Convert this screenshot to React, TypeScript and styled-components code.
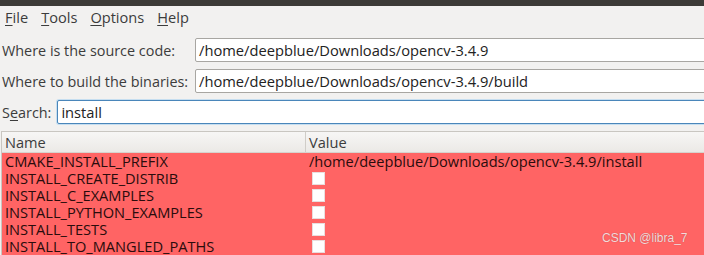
import React from 'react';
import styled, { createGlobalStyle } from 'styled-components';

const GlobalStyle = createGlobalStyle`
  html, body {
    margin: 0;
    padding: 0;
    overflow: hidden;
    background: #f2f1f0;
  }
  body {
    font-family: "Open Sans", "Noto Sans", sans-serif;
    color: #3c3c3c;
  }
`;

const Window = styled.div`
  width: 820px;
  height: 255px;
  display: flex;
  flex-direction: column;
`;

const TitleStrip = styled.div`
  height: 6px;
  background: #3c3b37;
`;

const MenuBar = styled.div`
  height: 24px;
  display: flex;
  align-items: center;
  padding-left: 5px;
  gap: 13px;
  font-size: 14.6px;
  color: #3c3c3c;
`;

const MenuItem = styled.span`
  u {
    text-decoration-thickness: 1px;
    text-underline-offset: 2px;
  }
`;

const Form = styled.div`
  display: grid;
  grid-template-columns: 193px 1fr;
  row-gap: 7px;
  padding: 9px 0 0 2px;
  align-items: center;
`;

const Label = styled.label`
  font-size: 14.4px;
  color: #3c3c3c;
  white-space: nowrap;
  u {
    text-decoration-thickness: 1px;
    text-underline-offset: 2px;
  }
`;

const Field = styled.div<{ $focused?: boolean }>`
  height: 24px;
  box-sizing: border-box;
  background: #fff;
  border: 1px solid ${p => (p.$focused ? '#4a86ba' : '#a8a6a2')};
  box-shadow: ${p => (p.$focused ? '0 0 0 1px #c6def0' : 'none')};
  border-radius: 2px;
  display: flex;
  align-items: center;
  padding-left: 3px;
  font-size: 14.7px;
  color: #222;
  white-space: nowrap;
`;

const SearchRow = styled.div`
  display: flex;
  align-items: center;
  gap: 6px;
  padding: 7px 0 0 2px;
`;

const SearchField = styled(Field)`
  flex: 1;
`;

const Table = styled.div`
  margin: 7px 0 0 1px;
  border-top: 1px solid #c9c6c1;
  border-left: 1px solid #c9c6c1;
  flex: 1;
  display: flex;
  flex-direction: column;
`;

const Header = styled.div`
  height: 20px;
  display: grid;
  grid-template-columns: 303px 1fr;
  background: linear-gradient(#f7f6f5, #ebe9e6);
  border-bottom: 1px solid #d6d3ce;
  font-size: 14.6px;
  line-height: 20px;
  color: #3c3c3c;
`;

const HeaderCell = styled.div`
  padding-left: 3px;
  & + & {
    border-left: 1px solid #d0cdc8;
  }
`;

const Body = styled.div`
  background: #ff6464;
  flex: 1;
`;

const Row = styled.div`
  height: 17px;
  line-height: 17px;
  display: grid;
  grid-template-columns: 303px 1fr;
  align-items: center;
  font-size: 14.6px;
  color: #2a0c0c;
`;

const NameCell = styled.div`
  padding-left: 3px;
  white-space: nowrap;
`;

const ValueCell = styled.div`
  padding-left: 4px;
  white-space: nowrap;
  display: flex;
  align-items: center;
`;

const Check = styled.span`
  display: inline-block;
  width: 13px;
  height: 13px;
  box-sizing: border-box;
  background: #fff;
  border: 1px solid #e9dede;
  margin-left: 3px;
`;

const Watermark = styled.div`
  position: absolute;
  left: 602px;
  top: 231px;
  font-family: "Liberation Sans", Arial, sans-serif;
  font-size: 12px;
  color: #f6dada;
  text-shadow: 0 0 1px #b24a4a;
  white-space: nowrap;
`;

const rows: { name: string; value?: string }[] = [
  { name: 'CMAKE_INSTALL_PREFIX', value: '/home/deepblue/Downloads/opencv-3.4.9/install' },
  { name: 'INSTALL_CREATE_DISTRIB' },
  { name: 'INSTALL_C_EXAMPLES' },
  { name: 'INSTALL_PYTHON_EXAMPLES' },
  { name: 'INSTALL_TESTS' },
  { name: 'INSTALL_TO_MANGLED_PATHS' },
];

export default function App() {
  return (
    <>
      <GlobalStyle />
      <Window>
        <TitleStrip />
        <MenuBar>
          <MenuItem><u>F</u>ile</MenuItem>
          <MenuItem><u>T</u>ools</MenuItem>
          <MenuItem><u>O</u>ptions</MenuItem>
          <MenuItem><u>H</u>elp</MenuItem>
        </MenuBar>
        <Form>
          <Label>Where is the source code:</Label>
          <Field>/home/deepblue/Downloads/opencv-3.4.9</Field>
          <Label>Where to build the binaries:</Label>
          <Field>/home/deepblue/Downloads/opencv-3.4.9/build</Field>
        </Form>
        <SearchRow>
          <Label>S<u>e</u>arch:</Label>
          <SearchField $focused>install</SearchField>
        </SearchRow>
        <Table>
          <Header>
            <HeaderCell>Name</HeaderCell>
            <HeaderCell>Value</HeaderCell>
          </Header>
          <Body>
            {rows.map(r => (
              <Row key={r.name}>
                <NameCell>{r.name}</NameCell>
                <ValueCell>{r.value ?? <Check />}</ValueCell>
              </Row>
            ))}
          </Body>
        </Table>
      </Window>
      <Watermark>CSDN @libra_7</Watermark>
    </>
  );
}
